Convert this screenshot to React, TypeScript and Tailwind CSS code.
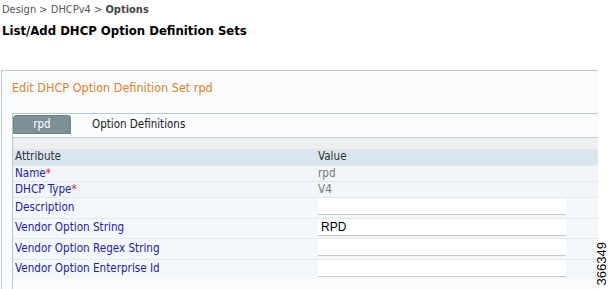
import React from "react";

const font = { fontFamily: '"DejaVu Sans Condensed", "DejaVu Sans", sans-serif' };
const arial = { fontFamily: '"Liberation Sans", Arial, sans-serif' };

const rows: { label: string; required?: boolean; value?: string; input?: boolean }[] = [
  { label: "Name", required: true, value: "rpd" },
  { label: "DHCP Type", required: true, value: "V4" },
  { label: "Description", input: true, value: "" },
  { label: "Vendor Option String", input: true, value: "RPD" },
  { label: "Vendor Option Regex String", input: true, value: "" },
  { label: "Vendor Option Enterprise Id", input: true, value: "" },
];

export default function App() {
  return (
    <div className="relative h-[289px] w-[610px] overflow-hidden bg-white text-[11.6px]" style={font}>
      <div className="px-[2px] pt-[3px] text-[11px] leading-[14px] text-[#555]">
        Design &gt; DHCPv4 &gt; <span className="font-bold text-[#444]">Options</span>
      </div>
      <h1 className="mt-[6px] px-[2px] text-[13px] font-bold leading-[16px] text-black">List/Add DHCP Option Definition Sets</h1>

      <div className="ml-[1px] mt-[31px] h-[300px] w-[597px] border-l border-t border-[#b9c6ce] bg-[#fafbfc]">
        <div className="px-[10px] pt-[9px] text-[12.5px] leading-[15px] text-[#d9832a]">Edit DHCP Option Definition Set rpd</div>

        <div className="ml-[10px] mt-[18px] h-full border-l border-t border-[#b9c6ce]">
          <div className="flex h-[24px] items-end border-b border-[#c5cdd2] pb-[3px]">
            <div className="flex h-[19px] w-[58px] items-center justify-center rounded-t-[3px] border border-[#6f8187] bg-[#7c9097] text-[11.5px] text-white">
              rpd
            </div>
            <div className="ml-[21px] flex h-[19px] items-center text-[11.5px] text-[#222]">Option Definitions</div>
          </div>
          <div className="h-[11px] bg-[#eceeef]" />

          <div className="flex h-[16px] items-center bg-[#dbe5f0] text-[#333]">
            <div className="w-[305px] pl-[2px]">Attribute</div>
            <div>Value</div>
          </div>

          {rows.map((row) =>
            row.input ? (
              <div key={row.label} className="flex h-[20.5px] items-start border-t border-[#e3e8ec] bg-[#f4f7fa]">
                <div className="flex h-[19px] w-[305px] items-center pl-[2px] text-[#1f239e]">{row.label}</div>
                <div className="flex h-[17px] w-[248px] items-center border-b border-[#c8c8c8] bg-white pl-[3px] text-[12px] text-black" style={arial}>
                  {row.value}
                </div>
              </div>
            ) : (
              <div key={row.label} className="flex h-[16px] items-center border-t border-[#e3e8ec] bg-[#f1f5f9]">
                <div className="w-[305px] pl-[2px] text-[#1f259c]">
                  {row.label}
                  {row.required && <span className="text-[#e0252a]">*</span>}
                </div>
                <div className="text-[#777]">{row.value}</div>
              </div>
            )
          )}
        </div>
      </div>

      <div className="absolute bottom-[4px] right-[1px] rotate-180 text-[13px] leading-[14px] text-black [writing-mode:vertical-rl]" style={arial}>
        366349
      </div>
    </div>
  );
}
